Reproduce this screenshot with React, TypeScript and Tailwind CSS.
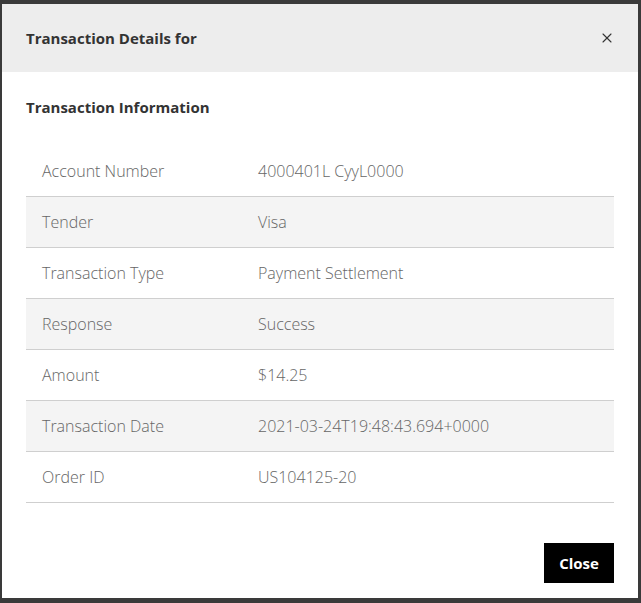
import { X } from 'lucide-react';

const rows = [
  { label: 'Account Number', value: '4000401L CyyL0000' },
  { label: 'Tender', value: 'Visa' },
  { label: 'Transaction Type', value: 'Payment Settlement' },
  { label: 'Response', value: 'Success' },
  { label: 'Amount', value: '$14.25' },
  { label: 'Transaction Date', value: '2021-03-24T19:48:43.694+0000' },
  { label: 'Order ID', value: 'US104125-20' },
];

export default function App() {
  return (
    <div
      className="min-h-[603px] bg-[#3a3a3a] pt-[4px] pl-[2px] pr-[3px]"
      style={{ fontFamily: '"Open Sans", sans-serif' }}
    >
      <div className="bg-white">
        <div className="h-[68px] bg-[#ededed] flex items-center justify-between pl-[24px] pr-[23px]">
          <h2 className="text-[15px] font-bold text-[#333] pt-[1px]">Transaction Details for</h2>
          <button className="text-[#333]">
            <X className="w-[16px] h-[16px]" strokeWidth={1.6} />
          </button>
        </div>

        <div className="pl-[24px] pr-[24px] pt-[25px] pb-[15px]">
          <h3 className="text-[15px] leading-[20px] font-bold text-[#333] mb-[29px]">
            Transaction Information
          </h3>

          <div>
            {rows.map((row, i) => (
              <div
                key={row.label}
                className={`h-[51px] flex items-center border-b border-[#cfcfcf] text-[16px] font-light text-[#666] pb-[1px] ${
                  i % 2 === 1 ? 'bg-[#f4f4f4]' : 'bg-white'
                }`}
              >
                <div className="w-[232px] pl-[16px]">{row.label}</div>
                <div>{row.value}</div>
              </div>
            ))}
          </div>

          <div className="flex justify-end mt-[40px]">
            <button className="w-[70px] h-[40px] bg-black text-white text-[15px] font-bold">
              Close
            </button>
          </div>
        </div>
      </div>
    </div>
  );
}
